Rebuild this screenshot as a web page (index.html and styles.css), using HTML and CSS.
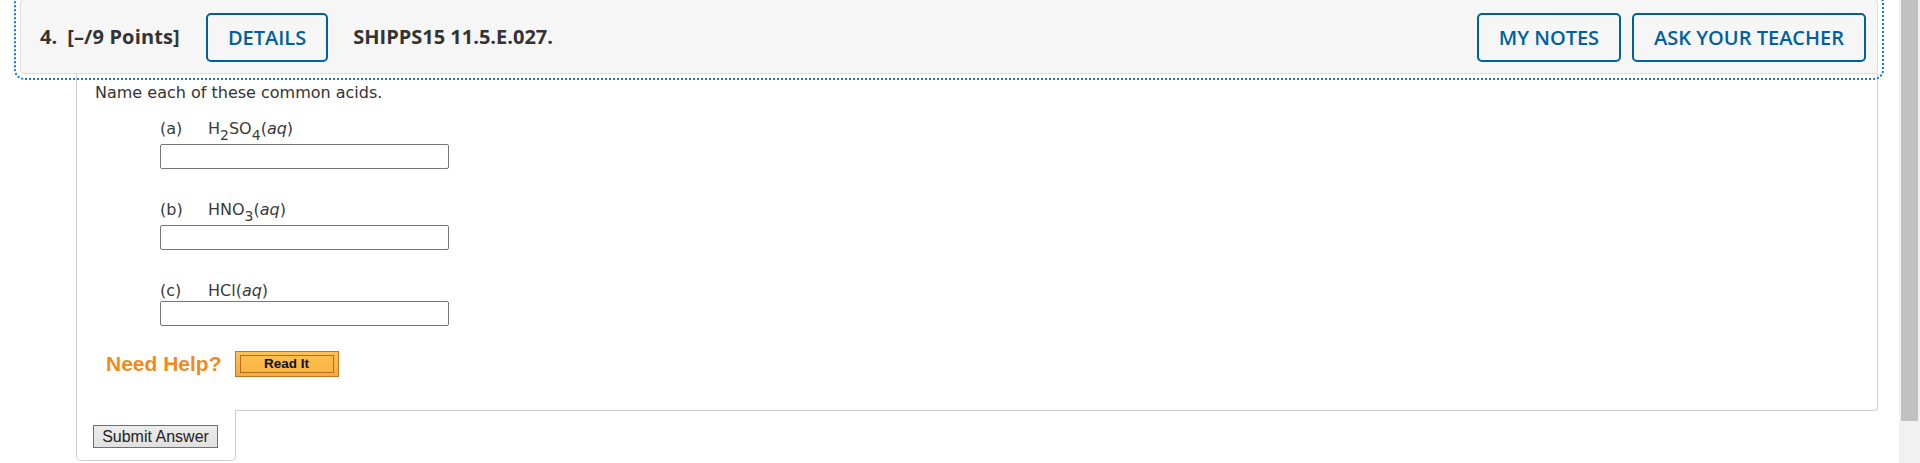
FILE: index.html
```html
<!DOCTYPE html>
<html lang="en">
<head>
<meta charset="utf-8">
<title>Question 4</title>
<link rel="stylesheet" href="styles.css">
</head>
<body>
<div class="page">
  <header class="qhead" tabindex="0">
    <div class="qnum">4.</div>
    <div class="qpts">[–/9 Points]</div>
    <button class="btn">DETAILS</button>
    <div class="qid">SHIPPS15 11.5.E.027.</div>
    <div class="actions">
      <button class="btn">MY NOTES</button>
      <button class="btn">ASK YOUR TEACHER</button>
    </div>
  </header>
  <section class="qbody">
    <p class="prompt">Name each of these common acids.</p>
    <div class="parts">
      <div class="part">
        <div class="plabel"><span class="letter">(a)</span>H<sub>2</sub>SO<sub>4</sub>(<i>aq</i>)</div>
        <input class="ans" type="text">
      </div>
      <div class="part">
        <div class="plabel"><span class="letter">(b)</span>HNO<sub>3</sub>(<i>aq</i>)</div>
        <input class="ans" type="text">
      </div>
      <div class="part">
        <div class="plabel"><span class="letter">(c)</span>HCl(<i>aq</i>)</div>
        <input class="ans" type="text">
      </div>
    </div>
    <div class="help">
      <span class="need">Need Help?</span>
      <span class="readit"><span class="readit-in">Read It</span></span>
    </div>
  </section>
  <div class="submit-tab"><button class="submit">Submit Answer</button></div>
</div>
<div class="scrollbar"><div class="thumb"></div></div>
</body>
</html>
```

FILE: styles.css
```css
html { overflow: hidden; background: #fff; }
body { margin: 0; background: #fff; }

.page {
  margin: 0 42px 0 20px;
}

.qhead {
  display: flex;
  align-items: center;
  margin-top: -1px;
  padding: 13px 11px 11px 19px;
  background: #f6f6f6;
  border: 1px solid #dddddd;
  border-radius: 4px;
  outline: 2px dotted #0a78e0;
  outline-offset: 4px;
  font-family: "Open Sans", "Liberation Sans", sans-serif;
  font-size: 20px;
  color: #333333;
}

.qnum { font-weight: 700; margin-right: 10px; margin-top: -2px; }
.qpts { font-weight: 700; margin-right: 26px; margin-top: -2px; letter-spacing: 0.15px; }
.qid { font-weight: 700; margin-left: 25px; margin-top: -2px; }

.btn {
  font-family: "Open Sans", "Liberation Sans", sans-serif;
  font-size: 20px;
  font-weight: 600;
  line-height: 27px;
  color: #00609e;
  background: transparent;
  border: 2px solid #00609e;
  border-radius: 5px;
  padding: 9px 20px;
  margin: 0;
}

.actions {
  margin-left: auto;
  display: flex;
  gap: 11px;
}

.qbody {
  margin-left: 56px;
  border: 1px solid #cccccc;
  border-top: none;
  border-radius: 0 0 4px 0;
  padding: 9px 18px 33px 18px;
  background: #fff;
  font-family: "DejaVu Sans", Verdana, sans-serif;
  font-size: 16px;
  color: #333333;
}

.prompt {
  margin: 0;
}

.parts {
  margin: 17px 0 0 65px;
  display: flex;
  flex-direction: column;
  gap: 31px;
}

.plabel {
  color: #3a3a3a;
}

.letter {
  display: inline-block;
  width: 48px;
}

.plabel sub {
  font-size: 14px;
  vertical-align: -6px;
}

.ans {
  display: block;
  box-sizing: border-box;
  width: 289px;
  height: 25px;
  margin: 1px 0 0 0;
  border: 1px solid #767676;
  border-radius: 2px;
  background: #fff;
  padding: 0 4px;
  font: 16px "DejaVu Sans", sans-serif;
}

.help {
  display: flex;
  align-items: center;
  gap: 13px;
  margin: 25px 0 0 11px;
}

.need {
  font-family: "Liberation Sans", Arial, sans-serif;
  font-weight: 700;
  font-size: 21px;
  color: #f18a1c;
}

.readit {
  display: inline-block;
  box-sizing: border-box;
  width: 104px;
  height: 26px;
  padding: 3px 4px;
  border: 1px solid #c47520;
  background: linear-gradient(#fcc25a, #f9a93a);
}

.readit-in {
  display: block;
  box-sizing: border-box;
  height: 18px;
  border: 1px solid #b0701f;
  background: linear-gradient(#fdbf4e, #fcb441);
  font-family: "Liberation Sans", Arial, sans-serif;
  font-weight: 700;
  font-size: 13.5px;
  line-height: 16px;
  text-align: center;
  color: #111;
}

.submit-tab {
  box-sizing: border-box;
  width: 160px;
  margin: -1px 0 0 56px;
  padding: 15px 16px 12px 16px;
  border: 1px solid #cccccc;
  border-top: none;
  border-radius: 0 0 5px 5px;
  background: #fff;
}

.submit {
  display: block;
  box-sizing: border-box;
  width: 125px;
  height: 23px;
  margin: 0;
  padding: 1px 0;
  border: 1px solid #707070;
  border-radius: 0;
  background: linear-gradient(#ececec, #e0e0e0);
  font-family: "Liberation Sans", Arial, sans-serif;
  font-size: 16px;
  line-height: 19px;
  color: #222;
  text-align: center;
}

.scrollbar {
  position: fixed;
  top: 0;
  right: 0;
  width: 21px;
  height: 100%;
  background: #f1f1f1;
}

.thumb {
  margin-left: 2px;
  width: 17px;
  height: 421px;
  background: #c1c1c1;
}
```
